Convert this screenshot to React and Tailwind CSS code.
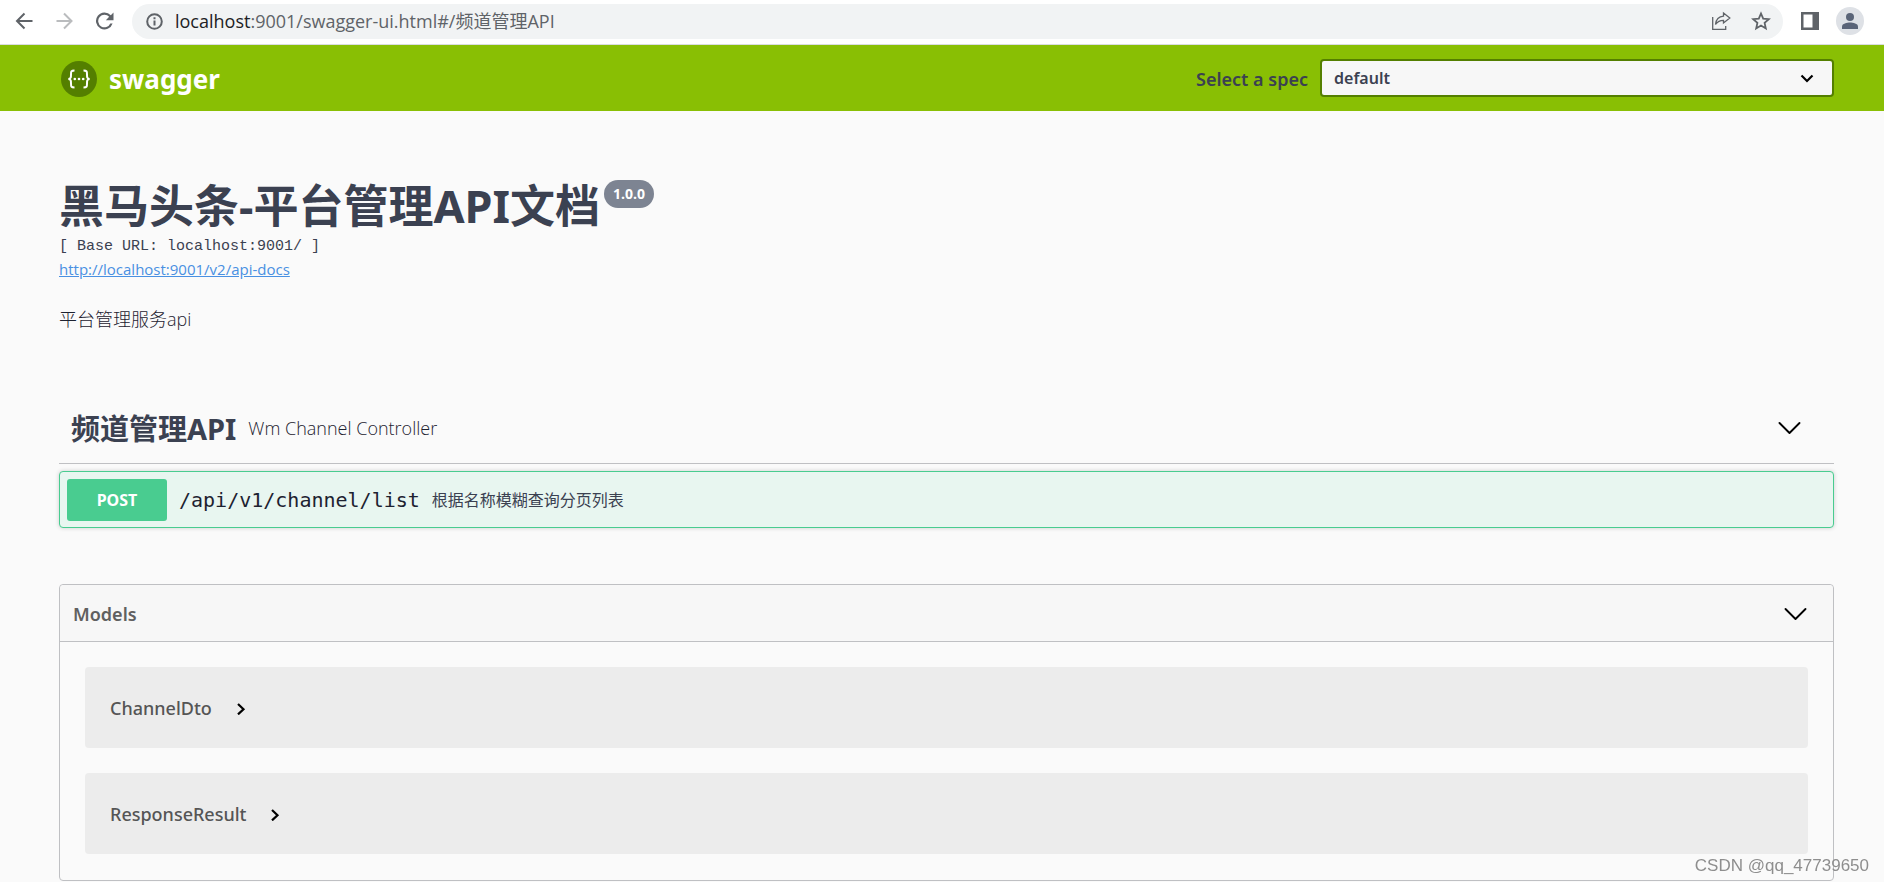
import { useState } from 'react';

const SANS = 'font-["Open_Sans","Noto_Sans_CJK_SC",sans-serif]';
const TITLE = 'font-["Noto_Sans","Noto_Sans_CJK_SC",sans-serif]';
const PAGE = 'pl-[59px] pr-[50px]';

const ChevronDown = ({ size = 25 }) => (
  <svg fill="none" height={size} stroke="#000" strokeWidth="1.9" strokeLinecap="round" strokeLinejoin="round" viewBox="0 0 25 25" width={size}>
    <path d="M2.5 7L12.5 17L22.5 7"/>
  </svg>
);

const ChevronRight = () => (
  <svg fill="none" height="14" stroke="#000" strokeWidth="2.2" viewBox="0 0 10 14" width="10">
    <path d="M2 3L7.500 8.200L2 13.400"/>
  </svg>
);

function BrowserBar() {
  const [url, setUrl] = useState('localhost:9001/swagger-ui.html#/频道管理API');
  const host = url.split(':')[0];

  return (
    <div className="flex items-center h-[45px] pb-0.5 pl-3 pr-5 bg-white border-b border-[#dadce0]">
      <button type="button" aria-label="Back" className="w-6 h-6 mr-4">
        <svg fill="none" height="24" stroke="#5f6368" strokeWidth="2" viewBox="0 0 24 24" width="24">
          <path d="M20.500 12H5.500M12.500 4.500L5 12l7.500 7.500"/>
        </svg>
      </button>
      <button type="button" aria-label="Forward" className="w-6 h-6 mr-4">
        <svg fill="none" height="24" stroke="#babcbe" strokeWidth="2" viewBox="0 0 24 24" width="24">
          <path d="M4.500 12h15M12 4.500l7.500 7.500L12 19.500"/>
        </svg>
      </button>
      <button type="button" aria-label="Reload" className="w-6 h-6 mr-4">
        <svg height="24" viewBox="0 0 24 24" width="24">
          <path fill="#5f6368" d="M18.800 6.200A8.500 8.500 0 1020.600 14.500h-2.300A6.300 6.300 0 1117.200 7.800L13.800 11.200h7.700V3.500z"/>
        </svg>
      </button>
      <div className="flex-1 flex items-center h-[35px] rounded-full bg-[#f1f3f4] pl-[14px] pr-3">
        <svg className="mr-3" fill="none" height="17" stroke="#5f6368" strokeWidth="2" viewBox="0 0 17 17" width="17">
          <circle cx="8.500" cy="8.500" r="7.300"/>
          <path d="M8.500 7.500v5M8.500 4.200v2"/>
        </svg>
        <div className={`relative flex-1 text-[18px] leading-6 text-[#5f6368] ${SANS}`}>
          <input aria-label="Address" className="w-full bg-transparent outline-none" value={url} onChange={(e) => setUrl(e.target.value)}/>
          <span aria-hidden="true" className="absolute left-0 top-0 bg-[#f1f3f4] text-[#202124] pointer-events-none">{host}</span>
        </div>
        <button type="button" aria-label="Share" className="mr-5">
          <svg fill="none" height="20" stroke="#5f6368" strokeWidth="1.300" viewBox="0 0 20 20" width="20">
            <path d="M1.700 6v12.300h13V15"/>
            <path d="M12.500 2l6.300 5-6.300 5V9.300c-3.500 0-6 1.200-8 4.200.5-4.800 3.500-8 8-8.300z"/>
          </svg>
        </button>
        <button type="button" aria-label="Bookmark">
          <svg fill="none" height="20" stroke="#5f6368" strokeWidth="1.800" viewBox="0 0 20 20" width="20">
            <path d="M10 2.500l2.200 5.200 5.600.5-4.200 3.700 1.200 5.500-4.800-2.900-4.800 2.900 1.200-5.500L2.200 8.200l5.600-.5z"/>
          </svg>
        </button>
      </div>
      <button type="button" aria-label="Side panel" className="ml-[18px] mr-[17px]">
        <svg height="18" viewBox="0 0 18 18" width="18">
          <path fill="#5f6368" fillRule="evenodd" d="M0 0h18v18H0zM2.500 2.500v13h9v-13z"/>
        </svg>
      </button>
      <button type="button" aria-label="Profile" className="flex items-center justify-center w-7 h-7 rounded-full bg-[#dee1e6]">
        <svg fill="#5a6478" height="16" viewBox="0 0 16 16" width="16">
          <circle cx="8" cy="4" r="4"/>
          <path d="M0 16v-2.500c0-3 5-4 8-4s8 1 8 4V16z"/>
        </svg>
      </button>
    </div>
  );
}

function Topbar() {
  return (
    <header className={`flex items-center justify-between h-[66px] bg-[#89bf04] ${PAGE}`}>
      <a href="#top" className="flex items-center gap-3 pt-0.5 pl-0.5 text-[26px] font-bold leading-9 text-white">
        <svg height="36" viewBox="0 0 36 36" width="36">
          <circle cx="18" cy="18" fill="#547f00" r="18"/>
          <g fill="none" stroke="#fff" strokeWidth="2">
            <path d="M13.500 9.500c-3.500 0-3.500 1-3.500 4s0 4-2.500 4.500c2.500.5 2.500 1.500 2.500 4.500s0 4 3.500 4"/>
            <path d="M22.500 9.500c3.500 0 3.500 1 3.500 4s0 4 2.500 4.500c-2.500.5-2.500 1.500-2.500 4.500s0 4-3.500 4"/>
          </g>
          <g fill="#fff">
            <circle cx="13.800" cy="18" r="1.300"/><circle cx="18" cy="18" r="1.300"/><circle cx="22.200" cy="18" r="1.300"/>
          </g>
        </svg>
        <span className={TITLE}>swagger</span>
      </a>
      <div className="flex items-center">
        <label htmlFor="spec" className={`mr-3 pt-0.5 text-[18px] font-semibold text-[#3b4151] ${TITLE}`}>Select a spec</label>
        <div className="relative">
          <select id="spec" className={`appearance-none block w-[514px] h-[38px] pl-3 rounded border-2 border-[#547f00] bg-[#f7f7f7] text-[16px] font-semibold text-[#3b4151] ${TITLE}`}>
            <option>default</option>
          </select>
          <svg className="absolute right-5 top-3 pointer-events-none" fill="none" height="14" stroke="#000" strokeWidth="2.200" viewBox="0 0 14 14" width="14">
            <path d="M1.500 4.500L7 10L12.500 4.500"/>
          </svg>
        </div>
      </div>
    </header>
  );
}

function ModelBox({ name }) {
  return (
    <div className="flex items-center h-[81px] px-[25px] rounded bg-[#ececec]">
      <button type="button" className={`flex items-center gap-6 text-[18px] font-medium leading-7 text-[#555555] ${TITLE}`}>
        {name}
        <ChevronRight/>
      </button>
    </div>
  );
}

export default function App() {
  return (
    <div className={`min-h-screen bg-[#fafafa] text-[#3b4151] ${SANS}`}>
      <BrowserBar/>
      <Topbar/>
      <main className={`${PAGE} pt-[62px]`}>
        <section>
          <h1 className={`flex items-start text-[45px] font-bold leading-[66px] ${TITLE}`}>
            黑马头条-平台管理API文档
            <span className={`mt-[7px] ml-1 px-[9px] rounded-full bg-[#7d8492] text-[14px] leading-7 text-white ${SANS}`}>1.0.0</span>
          </h1>
          <pre className='text-[15px] leading-4 font-["Liberation_Mono",monospace]'>[ Base URL: localhost:9001/ ]</pre>
          <a href="#api-docs" className="block mt-0.5 text-[15px] leading-6 text-[#4990e2] underline">http://localhost:9001/v2/api-docs</a>
          <p className="mt-6 text-[18px] font-light leading-7 text-[#1d2230]">平台管理服务api</p>
        </section>

        <section className="mt-[61px]">
          <h2 className="flex items-center h-[70px] pl-3 pr-8 border-b border-[#bfc0c3]">
            <span className={`text-[29px] font-bold ${TITLE}`}>频道管理API</span>
            <span className="flex-1 ml-3 text-[18px] font-light text-[#1d2230]">Wm Channel Controller</span>
            <button type="button" aria-label="Collapse operations"><ChevronDown/></button>
          </h2>
          <button type="button" className="flex items-center w-full h-[57px] mt-[7px] px-[7px] rounded border border-[#49cc90] bg-[#e8f6f0] shadow-[0_0_4px_rgba(0,0,0,0.19)] text-left">
            <span className={`w-[100px] rounded-[3px] bg-[#49cc90] text-center text-[16px] font-bold leading-[42px] text-white ${TITLE}`}>POST</span>
            <span className='ml-3 text-[20px] text-[#1d2230] font-["DejaVu_Sans_Mono",monospace]'>/api/v1/channel/list</span>
            <span className="ml-3 text-[16px]">根据名称模糊查询分页列表</span>
          </button>
        </section>

        <section className="mt-14 rounded border border-[#bfc0c3]">
          <h3 className={`flex items-center justify-between h-[57px] pt-0.5 pl-[13px] pr-[25px] rounded-t bg-[#f7f7f7] border-b border-[#bfc0c3] text-[18px] font-semibold text-[#606060] ${TITLE}`}>
            Models
            <button type="button" aria-label="Collapse models"><ChevronDown/></button>
          </h3>
          <div className="flex flex-col gap-[25px] px-[25px] pt-[25px] pb-[26px]">
            <ModelBox name="ChannelDto"/>
            <ModelBox name="ResponseResult"/>
          </div>
        </section>
      </main>
      <div className='fixed right-[15px] bottom-1 text-[17px] leading-6 text-[#8e8e8e] font-["Liberation_Sans",sans-serif]'>CSDN @qq_47739650</div>
    </div>
  );
}
